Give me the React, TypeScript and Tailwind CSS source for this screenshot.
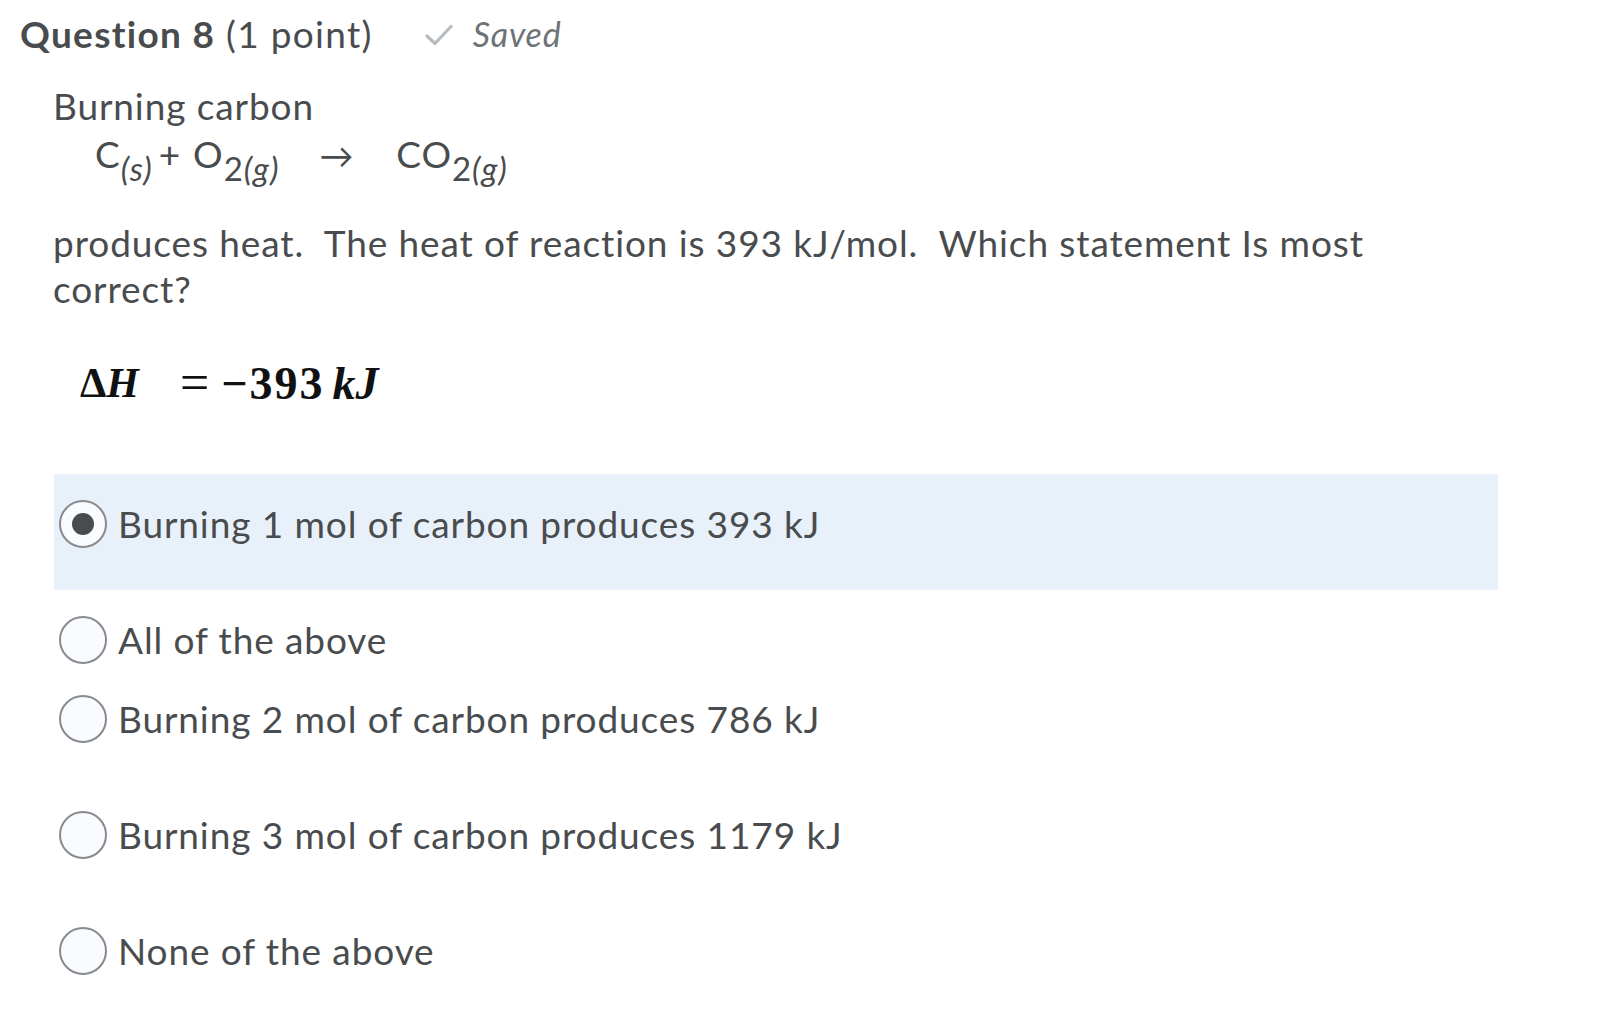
import React from 'react';

type Option = {
  label: string;
  selected?: boolean;
  rowClass: string;
};

const options: Option[] = [
  { label: 'Burning 1 mol of carbon produces 393 kJ', selected: true, rowClass: 'h-[116px]' },
  { label: 'All of the above', rowClass: 'h-[79px]' },
  { label: 'Burning 2 mol of carbon produces 786 kJ', rowClass: 'h-[116px]' },
  { label: 'Burning 3 mol of carbon produces 1179 kJ', rowClass: 'h-[116px]' },
  { label: 'None of the above', rowClass: 'h-[116px]' },
];

const Radio = function Radio({ selected }: { selected?: boolean }) {
  return (
    <div className="flex h-[48px] w-[48px] shrink-0 items-center justify-center rounded-full border-2 border-[#878b8e] bg-[#f9fbff]">
      {selected ? <div className="h-[22px] w-[22px] rounded-full bg-[#494c4e]" /> : null}
    </div>
  );
};

const Sub = function Sub({ children, italic }: { children: React.ReactNode; italic?: boolean }) {
  return (
    <span className={`relative top-[13px] text-[33px] ${italic ? 'italic' : ''}`}>{children}</span>
  );
};

export default function App() {
  return (
    <div className="min-h-screen bg-white font-['Lato','Liberation_Sans',sans-serif] text-[#494c4e]">
      {/* header */}
      <div className="mt-[14px] flex h-[40px] items-center pl-[20px] text-[37px] leading-[40px] tracking-[1.3px]">
        <span className="font-bold">Question 8</span>
        <span>&nbsp;(1 point)</span>
        <svg className="ml-[52px] mt-[2px]" width="28" height="22" viewBox="0 0 28 22" fill="none">
          <path d="M2 12 L10 19.5 L26 2.5" stroke="#b4bcc1" strokeWidth="3.2" strokeLinecap="round" strokeLinejoin="round" />
        </svg>
        <span className="ml-[20px] text-[34px] italic tracking-[0.8px] text-[#6e7376]">Saved</span>
      </div>

      {/* question body */}
      <div className="pl-[53px] text-[37px] tracking-[0.9px]">
        <p className="mt-[28px] leading-[48px]">Burning carbon</p>
        <div className="flex items-baseline pl-[42px] leading-[48px]">
          <span>C</span>
          <Sub italic>(s)</Sub>
          <span className="ml-[6px]">+</span>
          <span className="ml-[12px]">O</span>
          <Sub>
            2<span className="italic">(g)</span>
          </Sub>
          <span className="ml-[40px] text-[34px]">→</span>
          <span className="ml-[42px]">CO</span>
          <Sub>
            2<span className="italic">(g)</span>
          </Sub>
        </div>
        <p className="mt-[41px] leading-[46px]">
          produces heat.&nbsp; The heat of reaction is 393 kJ/mol.&nbsp; Which statement Is most
          <br />
          correct?
        </p>
        <div className="mt-[47px] flex h-[48px] items-center pl-[27px] font-['Liberation_Serif',serif] text-[46px] font-bold tracking-normal text-[#111]">
          <span className="text-[42px]">Δ</span>
          <span className="text-[42px] italic tracking-[-3px]">H</span>
          <span className="ml-[44px] text-[52px] font-normal">=</span>
          <span className="ml-[12px] tracking-[2px]">−393</span>
          <span className="ml-[8px] italic">kJ</span>
        </div>
      </div>

      {/* answers */}
      <div className="mt-[67px] w-[1498px] pl-[54px]">
        {options.map((opt) => (
          <div
            key={opt.label}
            className={`${opt.rowClass} ${opt.selected ? 'bg-[#e8f1fa]' : ''} pt-[26px] pl-[5px]`}
          >
            <div className="flex items-center gap-[11px]">
              <Radio selected={opt.selected} />
              <span className="text-[37px] leading-[48px] tracking-[0.9px]">{opt.label}</span>
            </div>
          </div>
        ))}
      </div>
    </div>
  );
}
